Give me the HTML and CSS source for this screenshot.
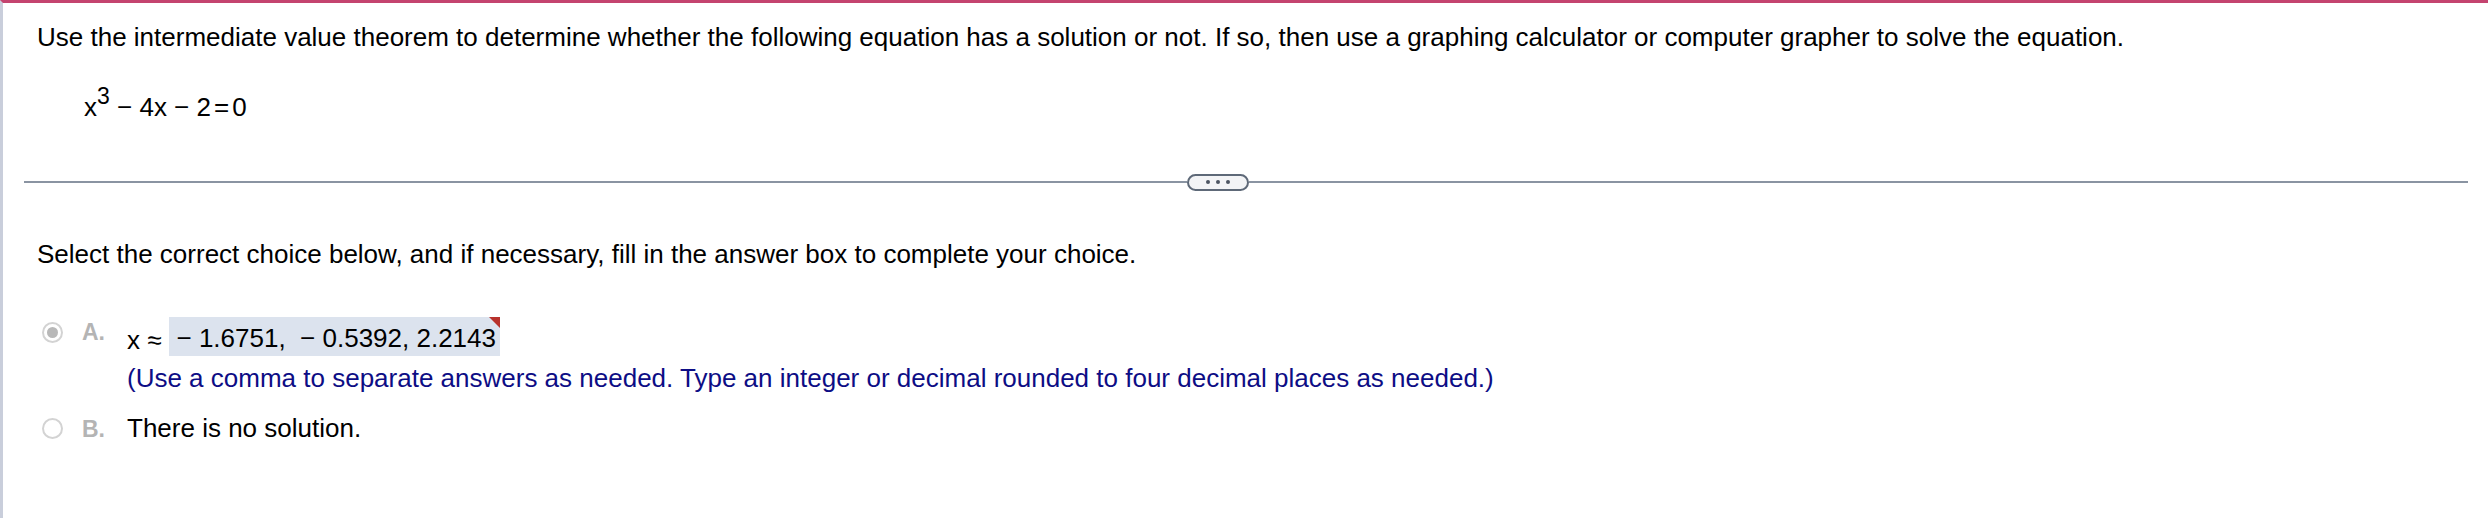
FILE: index.html
```html
<!DOCTYPE html>
<html>
<head>
<meta charset="utf-8">
<link rel="stylesheet" href="styles.css">
</head>
<body>
<div class="page">
  <div class="question">
    <p class="prompt">Use the intermediate value theorem to determine whether the following equation has a solution or not. If so, then use a graphing calculator or computer grapher to solve the equation.</p>
    <p class="equation">x<sup>3</sup> − 4x − 2<span class="eq">=</span>0</p>
  </div>
  <div class="divider">
    <span class="line line-left"></span>
    <span class="pill"><i></i><i></i><i></i></span>
    <span class="line line-right"></span>
  </div>
  <div class="answer">
    <p class="instruction">Select the correct choice below, and if necessary, fill in the answer box to complete your choice.</p>
    <div class="choice choice-a">
      <span class="radio checked"></span>
      <span class="letter">A.</span>
      <div class="choice-body">
        <div class="answer-line">
          <span class="var">x ≈</span>
          <span class="box">− 1.6751,&nbsp; − 0.5392, 2.2143<span class="flag"></span></span>
        </div>
        <p class="hint">(Use a comma to separate answers as needed. Type an integer or decimal rounded to four decimal places as needed.)</p>
      </div>
    </div>
    <div class="choice choice-b">
      <span class="radio"></span>
      <span class="letter">B.</span>
      <div class="choice-body">
        <span class="plain">There is no solution.</span>
      </div>
    </div>
  </div>
</div>
</body>
</html>
```
FILE: styles.css
```css
html, body {
  margin: 0;
  padding: 0;
  background: #ffffff;
}
body {
  font-family: "Liberation Sans", Arial, Helvetica, sans-serif;
  font-size: 26px;
  color: #000000;
}
.page {
  box-sizing: border-box;
  height: 518px;
  border-top: 3px solid #c4446f;
  border-left: 3px solid #c9cedb;
  overflow: hidden;
}
p {
  margin: 0;
}
.question {
  padding: 19px 0 0 34px;
}
.prompt {
  line-height: 30px;
}
.equation {
  margin-top: 40px;
  margin-left: 47px;
  line-height: 30px;
}
.equation sup {
  font-size: 23px;
  line-height: 0;
  position: relative;
  top: -2px;
}
.eq {
  margin: 0 3px;
}
.divider {
  display: flex;
  align-items: center;
  margin: 51px 20px 0 21px;
  height: 18px;
}
.line {
  height: 2px;
  background: #8a94a2;
}
.line-left {
  width: 1163px;
}
.line-right {
  flex: 1;
}
.pill {
  box-sizing: border-box;
  width: 62px;
  height: 17px;
  border: 2px solid #5e6978;
  border-radius: 9px;
  background: #f3f4f6;
  display: flex;
  align-items: center;
  justify-content: center;
  gap: 6px;
}
.pill i {
  width: 4px;
  height: 4px;
  border-radius: 50%;
  background: #4d5562;
}
.answer {
  padding: 0 0 0 34px;
}
.instruction {
  margin-top: 48px;
  line-height: 30px;
}
.choice {
  display: flex;
  align-items: flex-start;
}
.choice-a {
  margin-top: 48px;
}
.choice-b {
  margin-top: 20px;
}
.radio {
  box-sizing: border-box;
  width: 21px;
  height: 21px;
  border-radius: 50%;
  border: 2px solid #d3d3d3;
  margin: 5px 0 0 5px;
  display: flex;
  align-items: center;
  justify-content: center;
  flex: none;
}
.radio.checked::after {
  content: "";
  width: 11px;
  height: 11px;
  border-radius: 50%;
  background: #b8b8b8;
}
.letter {
  font-size: 23px;
  font-weight: bold;
  color: #b4b4b4;
  width: 45px;
  margin: 3px 0 0 19px;
  line-height: 24px;
  flex: none;
}
.choice-b .letter {
  margin-top: 4px;
}
.choice-body {
  display: flex;
  flex-direction: column;
}
.answer-line {
  display: flex;
  align-items: center;
}
.var {
  line-height: 30px;
  margin-right: 7px;
  margin-top: 6px;
}
.box {
  position: relative;
  background: #dce3ee;
  padding: 4px 4px 0 8px;
  height: 39px;
  box-sizing: border-box;
  line-height: 35px;
  display: flex;
  align-items: center;
  white-space: nowrap;
}
.flag {
  position: absolute;
  top: 0;
  right: 0;
  width: 0;
  height: 0;
  border-top: 11px solid #b8322c;
  border-left: 11px solid transparent;
}
.hint {
  color: #0d0d85;
  line-height: 30px;
  margin-top: 7px;
}
.plain {
  line-height: 30px;
}
```
